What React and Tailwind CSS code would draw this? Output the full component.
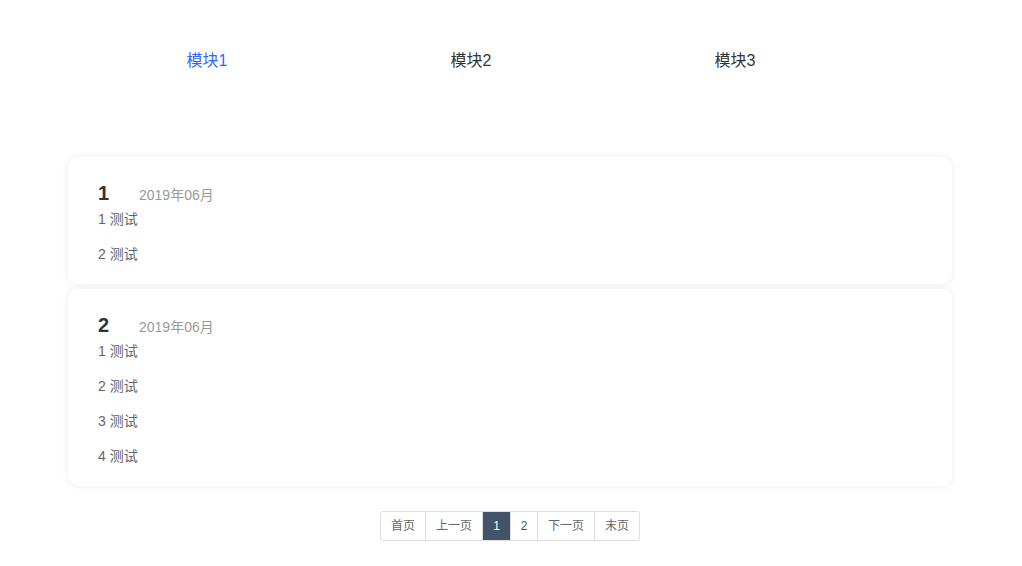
const tabs = ['模块1', '模块2', '模块3'];

const groups = [
  { id: 1, date: '2019年06月', items: ['1 测试', '2 测试'] },
  { id: 2, date: '2019年06月', items: ['1 测试', '2 测试', '3 测试', '4 测试'] },
];

const pages = ['首页', '上一页', '1', '2', '下一页', '末页'];

const App = () => {
  return (
    <div className="min-h-screen bg-white font-['Liberation_Sans','Noto_Sans_CJK_SC',sans-serif]">
      {/* tabs */}
      <div className="flex pl-[75px] pt-[49px] h-[157px]">
        {tabs.map((t, i) => (
          <div
            key={t}
            className={`w-[264px] text-center text-[16px] leading-[24px] ${i === 0 ? 'text-[#3366ff]' : 'text-[#333]'}`}
          >
            {t}
          </div>
        ))}
      </div>

      {/* list */}
      <div className="ml-[68px] mr-[70px] flex flex-col gap-[5px]">
        {groups.map((g) => (
          <div
            key={g.id}
            className="bg-white rounded-[10px] shadow-[0_0_8px_rgba(0,0,0,0.07)] pl-[30px] pt-[23px] pb-[20px]"
          >
            <div className="flex items-end h-[26px]">
              <span className="w-[41px] text-[20px] font-bold leading-[26px] text-[#333]">{g.id}</span>
              <span className="text-[14px] leading-[22px] text-[#999]">{g.date}</span>
            </div>
            <div className="flex flex-col gap-[15px] mt-[3px]">
              {g.items.map((it) => (
                <div key={it} className="text-[14px] leading-[20px] text-[#666]">
                  {it}
                </div>
              ))}
            </div>
          </div>
        ))}
      </div>

      {/* pagination */}
      <div className="flex justify-center mt-[25px] pr-[2px]">
        <div className="flex border border-[#ddd] rounded-[3px] h-[30px] text-[12px]">
          {pages.map((p, i) => {
            const active = p === '1';
            const num = p === '2';
            return (
              <div
                key={p}
                className={`flex items-center justify-center ${i > 0 ? 'border-l border-[#ddd]' : ''} ${
                  active ? 'bg-[#415469] text-white w-[28px] border-[#415469]' : num ? 'text-[#415469] w-[27px]' : 'text-[#666] px-[10px]'
                }`}
              >
                {p}
              </div>
            );
          })}
        </div>
      </div>
    </div>
  );
};

export default App;
